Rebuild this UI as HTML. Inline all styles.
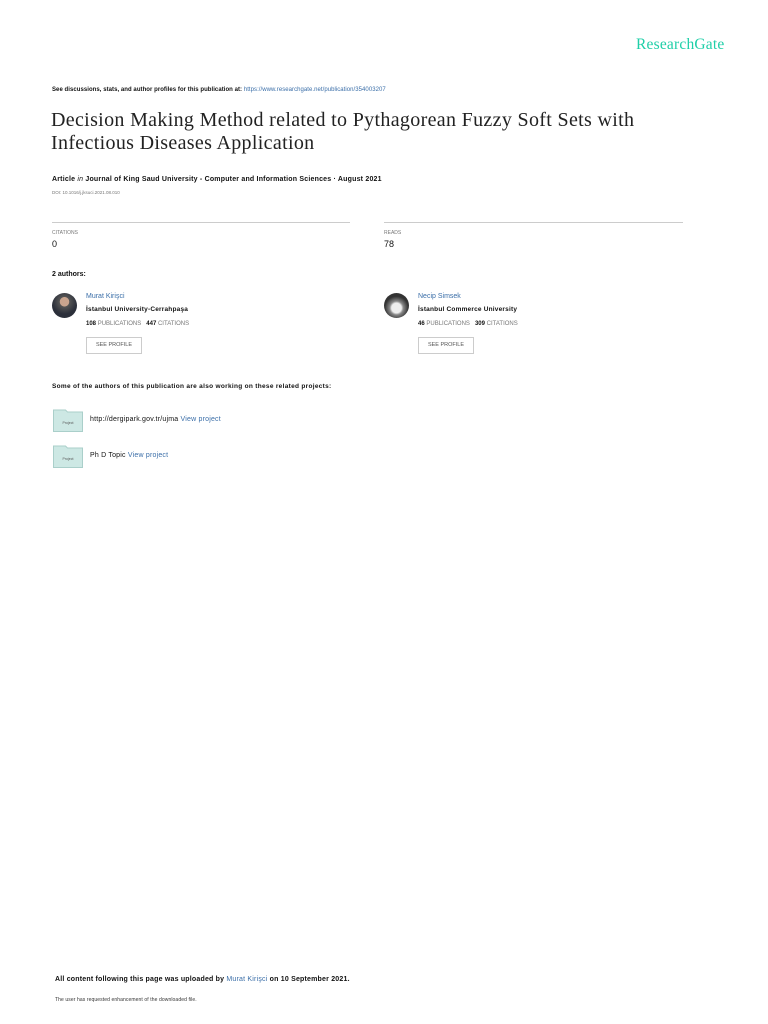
<!DOCTYPE html>
<html><head><meta charset="utf-8"><style>
*{margin:0;padding:0;box-sizing:border-box}
body{width:768px;height:1024px;background:#fff;position:relative;font-family:"Liberation Sans",sans-serif;color:#111;overflow:hidden}
.a{position:absolute;white-space:nowrap}
.s{font-size:6.5px}
.b{font-weight:bold}
.l{color:#3a6ea8}
.g{color:#777}
.hr{position:absolute;height:1px;background:#ccc}
.btn{position:absolute;width:56px;height:17px;border:1px solid #ccc;font-size:5.5px;color:#555;text-align:center;line-height:15px}
.av{position:absolute;width:25px;height:25px;border-radius:50%;overflow:hidden}
.pr{position:absolute;width:30px;height:23px}
</style></head><body>
<div class="a" style="left:636px;top:36px;font-family:'Liberation Serif',serif;font-size:15.5px;letter-spacing:0.2px;color:#1fcfa8">ResearchGate</div>
<div class="a s b" style="left:52px;top:87px;font-size:6px;letter-spacing:0.05px">See discussions, stats, and author profiles for this publication at: <span class="l" style="font-weight:normal">https://www.researchgate.net/publication/354003207</span></div>
<div class="a" style="left:51px;top:109px;font-family:'Liberation Serif',serif;font-size:20px;line-height:23px;letter-spacing:0.33px;color:#222">Decision Making Method related to Pythagorean Fuzzy Soft Sets with<br>Infectious Diseases Application</div>
<div class="a s" style="left:52px;top:176px;font-size:7px;letter-spacing:0.2px"><b>Article</b> <i>in</i> <b style="font-weight:600">Journal of King Saud University - Computer and Information Sciences · August 2021</b></div>
<div class="a g" style="left:52px;top:190px;font-size:4.5px">DOI: 10.1016/j.jksuci.2021.08.010</div>
<div class="hr" style="left:52px;top:222px;width:298px"></div>
<div class="hr" style="left:384px;top:222px;width:299px"></div>
<div class="a g" style="left:52px;top:230px;font-size:5px">CITATIONS</div>
<div class="a" style="left:52px;top:239px;font-size:9px">0</div>
<div class="a g" style="left:384px;top:230px;font-size:5px">READS</div>
<div class="a" style="left:384px;top:239px;font-size:9px">78</div>
<div class="a s b" style="left:52px;top:271px;font-size:7px">2 authors:</div>
<div class="av" style="left:52px;top:293px;background:radial-gradient(circle at 50% 35%,#c9a48e 0 22%,#555 24%,#2b2f3a 60%)"></div>
<div class="a l" style="left:86px;top:293px;font-size:7px">Murat Kirişci</div>
<div class="a b" style="left:86px;top:306px;font-size:6.5px;letter-spacing:0.2px">İstanbul University-Cerrahpaşa</div>
<div class="a s" style="left:86px;top:321px;font-size:6px"><b>108</b> <span class="g">PUBLICATIONS</span>&nbsp;&nbsp; <b>447</b> <span class="g">CITATIONS</span></div>
<div class="btn" style="left:86px;top:337px">SEE PROFILE</div>
<div class="av" style="left:384px;top:293px;background:radial-gradient(circle at 50% 60%,#eee 0 25%,#888 35%,#333 60%)"></div>
<div class="a l" style="left:418px;top:293px;font-size:7px">Necip Simsek</div>
<div class="a b" style="left:418px;top:306px;font-size:6.5px;letter-spacing:0.2px">İstanbul Commerce University</div>
<div class="a s" style="left:418px;top:321px;font-size:6px"><b>46</b> <span class="g">PUBLICATIONS</span>&nbsp;&nbsp; <b>309</b> <span class="g">CITATIONS</span></div>
<div class="btn" style="left:418px;top:337px">SEE PROFILE</div>
<div class="a b" style="left:52px;top:383px;font-size:6.5px;letter-spacing:0.3px">Some of the authors of this publication are also working on these related projects:</div>
<svg class="pr" style="left:53px;top:409px" viewBox="0 0 30 23"><path d="M0.5 1h12l2 2h15v19.5H0.5z" fill="#cde8e4" stroke="#aacfca"/><text x="15" y="15" font-size="3.5" text-anchor="middle" fill="#555" font-family="Liberation Sans">Project</text></svg>
<div class="a" style="left:90px;top:416px;font-size:7px;letter-spacing:0.2px">http://dergipark.gov.tr/ujma <span class="l">View project</span></div>
<svg class="pr" style="left:53px;top:445px" viewBox="0 0 30 23"><path d="M0.5 1h12l2 2h15v19.5H0.5z" fill="#cde8e4" stroke="#aacfca"/><text x="15" y="15" font-size="3.5" text-anchor="middle" fill="#555" font-family="Liberation Sans">Project</text></svg>
<div class="a" style="left:90px;top:452px;font-size:7px;letter-spacing:0.2px">Ph D Topic <span class="l">View project</span></div>
<div class="a b" style="left:55px;top:976px;font-size:7px;font-weight:600;letter-spacing:0.2px">All content following this page was uploaded by <span class="l" style="font-weight:normal">Murat Kirişci</span> on 10 September 2021.</div>
<div class="a" style="left:55px;top:997px;font-size:5px;color:#333;letter-spacing:0.1px">The user has requested enhancement of the downloaded file.</div>
</body></html>
